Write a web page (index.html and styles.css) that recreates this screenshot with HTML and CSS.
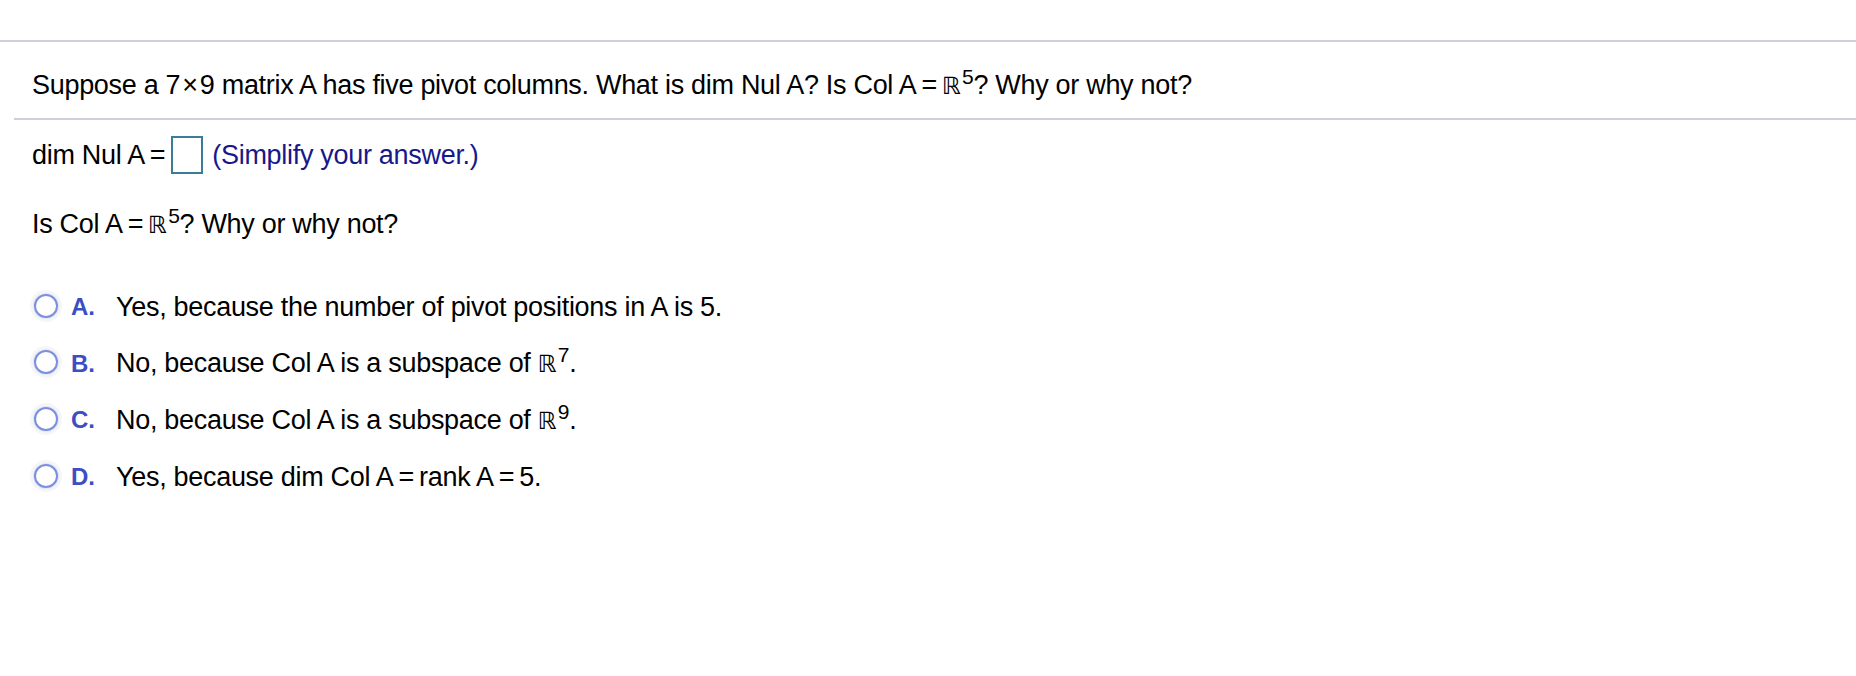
FILE: index.html
```html
<!DOCTYPE html>
<html>
<head>
<meta charset="utf-8">
<link rel="stylesheet" href="styles.css">
</head>
<body>
<div class="topbar"></div>
<div class="question">
  <p class="stem">Suppose a 7<span class="times">×</span>9 matrix A has five pivot columns. What is dim Nul A? Is Col A<span class="eq">=</span><span class="bb">ℝ</span><span class="sup">5</span>? Why or why not?</p>
</div>
<div class="work">
  <p class="answer">dim Nul A<span class="eq">=</span><span class="box"></span><span class="hint">(Simplify your answer.)</span></p>
  <p class="sub">Is Col A<span class="eq">=</span><span class="bb">ℝ</span><span class="sup">5</span>? Why or why not?</p>
  <ul class="choices">
    <li class="choice"><span class="radio"></span><span class="letter">A.</span><span class="ctext">Yes, because the number of pivot positions in A is 5.</span></li>
    <li class="choice"><span class="radio"></span><span class="letter">B.</span><span class="ctext">No, because Col A is a subspace of <span class="bb">ℝ</span><span class="sup">7</span>.</span></li>
    <li class="choice"><span class="radio"></span><span class="letter">C.</span><span class="ctext">No, because Col A is a subspace of <span class="bb">ℝ</span><span class="sup">9</span>.</span></li>
    <li class="choice"><span class="radio"></span><span class="letter">D.</span><span class="ctext">Yes, because dim Col A<span class="eq">=</span>rank A<span class="eq">=</span>5.</span></li>
  </ul>
</div>
</body>
</html>
```

FILE: styles.css
```css
html, body {
  margin: 0;
  padding: 0;
  background: #ffffff;
}
body {
  font-family: "Liberation Sans", Arial, sans-serif;
  font-size: 27px;
  letter-spacing: -0.3px;
  color: #000;
  line-height: 30px;
}
p {
  margin: 0;
}
.topbar {
  height: 40px;
  border-bottom: 2px solid #cdd0dc;
}
.question {
  margin-left: 14px;
  padding: 28px 0 17px 18px;
  border-bottom: 2px solid #cdd0dc;
}
.times {
  margin: 0 2px;
}
.eq {
  margin: 0 5px;
}
.bb {
  font-family: "DejaVu Sans", sans-serif;
  font-size: 24px;
  letter-spacing: 0;
}
.sup {
  font-size: 21px;
  line-height: 0;
  vertical-align: 10px;
  margin-left: 1px;
}
.work {
  padding: 16px 0 0 32px;
}
.box {
  display: inline-block;
  width: 28px;
  height: 34px;
  border: 2px solid #3a7d98;
  vertical-align: -10px;
  margin: 0 9px 0 1px;
}
.hint {
  color: #17188a;
}
.sub {
  margin-top: 35px;
}
.choices {
  list-style: none;
  margin: 52px 0 0 2px;
  padding: 0;
  display: flex;
  flex-direction: column;
  gap: 26.7px;
}
.choice {
  display: flex;
  align-items: center;
  height: 30px;
}
.radio {
  flex: none;
  width: 20px;
  height: 20px;
  border: 2.5px solid #7a8fe0;
  border-radius: 50%;
  box-shadow: 0 0 1.5px rgba(90, 110, 210, 0.6), 0 0 0 4px rgba(228, 230, 240, 0.35);
  margin-top: -3px;
}
.letter {
  width: 45px;
  margin-left: 13px;
  font-weight: bold;
  font-size: 24px;
  letter-spacing: 0;
  color: #3a4fc4;
}
.ctext {
  white-space: nowrap;
}
```
